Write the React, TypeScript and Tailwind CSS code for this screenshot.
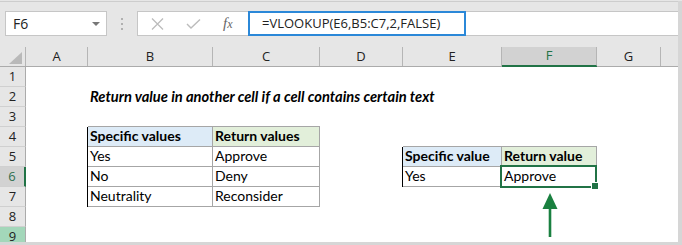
import React from 'react';

const COLS = ['A', 'B', 'C', 'D', 'E', 'F', 'G'];
const ROWS = [1, 2, 3, 4, 5, 6, 7, 8, 9];

type CellDef = { text?: string; cls?: string; size?: string };

const GRAY = 'border-[#a6a6a6]';

// only the cells that carry text or borders
const cells: Record<string, CellDef> = {
  B2: { text: 'Return value in another cell if a cell contains certain text', cls: 'relative z-10 font-bold italic overflow-visible', size: 'text-[14.7px]' },
  B3: { cls: `border-b ${GRAY}` },
  C3: { cls: `border-b ${GRAY}` },
  A4: { cls: 'border-r border-black' },
  A5: { cls: 'border-r border-black' },
  A6: { cls: 'border-r border-black' },
  A7: { cls: 'border-r border-black' },
  B4: { text: 'Specific values', cls: `font-bold bg-[#ddebf7] border-r border-b ${GRAY}` },
  C4: { text: 'Return values', cls: `font-bold bg-[#e2efda] border-r border-b ${GRAY}` },
  B5: { text: 'Yes', cls: `border-r border-b ${GRAY}` },
  C5: { text: 'Approve', cls: `border-r border-b ${GRAY}` },
  B6: { text: 'No', cls: `border-r border-b ${GRAY}` },
  C6: { text: 'Deny', cls: `border-r border-b ${GRAY}` },
  B7: { text: 'Neutrality', cls: `border-r border-b ${GRAY}` },
  C7: { text: 'Reconsider', cls: `border-r border-b ${GRAY}` },
  E4: { cls: `border-b ${GRAY}` },
  F4: { cls: `border-b ${GRAY}` },
  D5: { cls: 'border-r border-black' },
  D6: { cls: 'border-r border-black' },
  E5: { text: 'Specific value', cls: `font-bold bg-[#ddebf7] border-r border-b ${GRAY}` },
  F5: { text: 'Return value', cls: `font-bold bg-[#e2efda] border-r border-b ${GRAY}` },
  E6: { text: 'Yes', cls: `border-r border-b ${GRAY}` },
  F6: { text: 'Approve', cls: `relative border-r border-b ${GRAY}` },
};

const ColHeader = ({ label }: { label: string }) => {
  const active = label === 'F';
  return (
    <div className={active ? 'pt-[4px] border-b border-[#217346] bg-[#e6e6e6]' : 'pt-[4px] border-b border-[#ababab] bg-[#e6e6e6]'}>
      <div
        className={
          active
            ? 'h-full flex items-center justify-center border-r border-[#b5b5b5] border-b border-b-[#217346] bg-[#d2d2d2] text-[#217346]'
            : 'h-full flex items-center justify-center border-r border-[#b5b5b5] text-[#222]'
        }
      >
        {label}
      </div>
    </div>
  );
};

const RowHeader = ({ n }: { n: number }) => {
  let cls = 'flex items-center justify-center border-b border-[#d0d0d0] border-r border-r-[#ababab] bg-[#e6e6e6] text-[#222]';
  if (n === 6) cls = 'flex items-center justify-center border-b border-[#d0d0d0] border-r-2 border-r-[#217346] bg-[#d2d2d2] text-[#2f6f4f]';
  if (n === 9) cls = 'flex items-center justify-center border-b border-[#d0d0d0] border-r border-r-[#ababab] bg-[#a3d7ba] text-[#222]';
  return <div className={cls}>{n}</div>;
};

export default function App() {
  return (
    <div className="w-[682px] h-[245px] overflow-hidden flex flex-col bg-[#e6e6e6] pt-px" style={{ fontFamily: '"Open Sans", "Noto Sans", sans-serif' }}>
      <div className="flex h-[241px]">
        {/* window */}
        <div className="relative w-[678px] h-[241px] overflow-hidden bg-[#e6e6e6]">
          {/* name box + formula bar */}
          <div className="h-[42px] border-t border-[#cdcdcd] flex items-start pl-[5px] pt-[9px]">
            <div className="w-[102px] h-[25px] bg-white border border-[#c6c6c6] flex items-center justify-between pl-[7px] pr-[6px] text-[14px] text-[#222]">
              <span>F6</span>
              <svg width="8" height="4" viewBox="0 0 8 4"><path d="M0 0h8L4 4z" fill="#777" /></svg>
            </div>
            <div className="w-[30px] h-[25px] flex flex-col items-center justify-center gap-[3px]">
              <span className="w-[2px] h-[2px] bg-[#b0b0b0]" />
              <span className="w-[2px] h-[2px] bg-[#b0b0b0]" />
              <span className="w-[2px] h-[2px] bg-[#b0b0b0]" />
            </div>
            <div className="flex-1 h-[25px] flex">
              <div className="w-[111px] h-full bg-white border-y border-l border-[#c6c6c6] flex items-center pl-[13px]">
                <svg width="13" height="12" viewBox="0 0 13 12">
                  <path d="M1 0.5L12 11.5M12 0.5L1 11.5" stroke="#bcbcbc" strokeWidth="1.3" />
                </svg>
                <svg className="ml-[22px]" width="15" height="10" viewBox="0 0 15 10">
                  <path d="M1 5L5 9L14 0.5" stroke="#bcbcbc" strokeWidth="1.4" fill="none" />
                </svg>
                <span className="ml-[22px] text-[15px] italic text-[#666] leading-none" style={{ fontFamily: '"Liberation Serif", serif' }}>
                  f<span className="text-[12px]">x</span>
                </span>
              </div>
              <div className="w-[218px] h-full bg-white border-2 border-[#2b88d8] flex items-center pl-[12px] text-[13px] text-[#222] whitespace-nowrap">
                =VLOOKUP(E6,B5:C7,2,FALSE)
              </div>
              <div className="flex-1 h-full bg-white border-y border-[#c6c6c6]" />
            </div>
          </div>

          {/* sheet */}
          <div className="grid grid-cols-[26px_62px_125px_107px_83px_99px_95px_64px_1fr] grid-rows-[24px_repeat(9,20px)] text-[13px] bg-white">
            <div className="pt-[4px] border-b border-[#ababab] bg-[#e6e6e6]">
              <div className="h-full border-r border-[#b5b5b5] flex items-end justify-end pr-[3px] pb-[2px]">
                <svg width="13" height="12" viewBox="0 0 13 12"><path d="M13 0V12H0z" fill="#b9b9b9" /></svg>
              </div>
            </div>
            {COLS.map((c) => (
              <ColHeader key={c} label={c} />
            ))}
            <div className="border-b border-[#ababab] bg-[#e6e6e6]" />

            {ROWS.map((r) => (
              <React.Fragment key={r}>
                <RowHeader n={r} />
                {COLS.map((c) => {
                  const def = cells[c + r] || {};
                  return (
                    <div
                      key={c}
                      className={`flex items-end pl-[2px] pb-[1px] whitespace-nowrap text-black leading-[19px] ${def.size || 'text-[14px]'} ${def.cls || ''}`}
                      style={{ fontFamily: 'Lato, "Noto Sans", sans-serif' }}
                    >
                      {def.text}
                      {c + r === 'F6' && (
                        <>
                          <div className="absolute -left-[2px] -top-[2px] w-[97px] h-[23px] border-2 border-[#217346] z-10" />
                          <div className="absolute left-[89px] top-[15px] w-[8px] h-[8px] bg-[#217346] border border-white z-20" />
                        </>
                      )}
                    </div>
                  );
                })}
                <div />
              </React.Fragment>
            ))}
          </div>

          {/* arrow pointing at the result */}
          <svg className="absolute left-[540px] top-[190px]" width="20" height="50" viewBox="0 0 20 50">
            <path d="M10 2L17.5 18H11.3V46H8.7V18H2.5z" fill="#1a8040" />
          </svg>
        </div>
        <div className="w-[4px] h-full bg-[#d6d6d6]" />
      </div>
      <div className="h-[3px] bg-[#d6d6d6]" />
    </div>
  );
}
